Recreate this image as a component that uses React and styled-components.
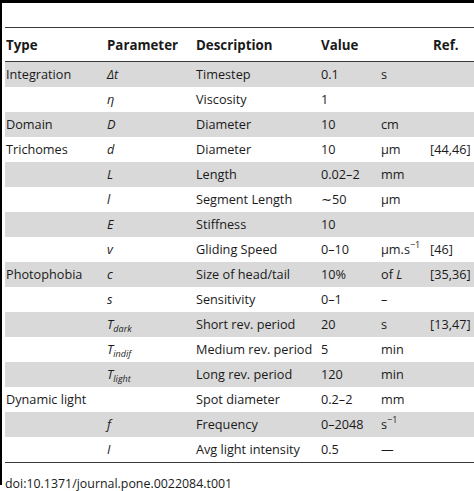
import React from "react";
import styled, { createGlobalStyle } from "styled-components";

const Global = createGlobalStyle`
  html, body {
    margin: 0;
    padding: 0;
    background: #ffffff;
  }
  body {
    font-family: "Open Sans", "Liberation Sans", sans-serif;
    color: #1a1a1a;
  }
`;

const Frame = styled.div`
  width: 474px;
  border-top: 3px solid #000;
  box-sizing: border-box;
`;

const Body = styled.div`
  border-left: 2px solid #000;
  padding-left: 3px;
  padding-top: 24px;
`;

const Table = styled.table`
  width: 469px;
  border-collapse: collapse;
  table-layout: fixed;
  font-size: 12.7px;
  border-top: 1px solid #3a3a3a;
  border-bottom: 1px solid #3a3a3a;
`;

const Head = styled.th`
  height: 33px;
  padding: 0 0 0 ${(p) => p.$pad || 1}px;
  text-align: left;
  font-weight: 700;
  font-size: 13.3px;
  border-bottom: 1px solid #3a3a3a;
  white-space: nowrap;
`;

const Row = styled.tr`
  background: ${(p) => (p.$shade ? "#d9d9d9" : "#ffffff")};
`;

const Cell = styled.td`
  height: 25px;
  padding: 0 0 0 1px;
  white-space: nowrap;
  line-height: 25px;
`;

const Sym = styled.i`
  font-style: italic;
`;

const Sub = styled.sub`
  font-size: 9px;
  font-style: italic;
  vertical-align: -3px;
  line-height: 0;
`;

const Sup = styled.sup`
  font-size: 9px;
  vertical-align: 6px;
  line-height: 0;
`;

const Spacer = styled.div`
  height: 22px;
`;

const Caption = styled.div`
  padding: 0 0 0 5px;
  margin-top: -10px;
  font-size: 12.4px;
  line-height: 18px;
  white-space: nowrap;
`;

const rows = [
  ["Integration", <Sym>Δt</Sym>, "Timestep", "0.1", "s", ""],
  ["", <Sym>η</Sym>, "Viscosity", "1", "", ""],
  ["Domain", <Sym>D</Sym>, "Diameter", "10", "cm", ""],
  ["Trichomes", <Sym>d</Sym>, "Diameter", "10", "μm", "[44,46]"],
  ["", <Sym>L</Sym>, "Length", "0.02–2", "mm", ""],
  ["", <Sym>l</Sym>, "Segment Length", "∼50", "μm", ""],
  ["", <Sym>E</Sym>, "Stiffness", "10", "", ""],
  ["", <Sym>v</Sym>, "Gliding Speed", "0–10", <>μm.s<Sup>−1</Sup></>, "[46]"],
  ["Photophobia", <Sym>c</Sym>, "Size of head/tail", "10%", <>of <Sym>L</Sym></>, "[35,36]"],
  ["", <Sym>s</Sym>, "Sensitivity", "0–1", "–", ""],
  ["", <><Sym>T</Sym><Sub>dark</Sub></>, "Short rev. period", "20", "s", "[13,47]"],
  ["", <><Sym>T</Sym><Sub>indif</Sub></>, "Medium rev. period", "5", "min", ""],
  ["", <><Sym>T</Sym><Sub>light</Sub></>, "Long rev. period", "120", "min", ""],
  ["Dynamic light", "", "Spot diameter", "0.2–2", "mm", ""],
  ["", <Sym>f</Sym>, "Frequency", "0–2048", <>s<Sup>−1</Sup></>, ""],
  ["", <Sym>I</Sym>, "Avg light intensity", "0.5", "—", ""],
];

export default function App() {
  return (
    <>
      <Global />
      <Frame>
        <Body>
          <Table>
            <colgroup>
              <col style={{ width: 101 }} />
              <col style={{ width: 89 }} />
              <col style={{ width: 125 }} />
              <col style={{ width: 60 }} />
              <col style={{ width: 49 }} />
              <col style={{ width: 45 }} />
            </colgroup>
            <thead>
              <tr>
                <Head>Type</Head>
                <Head>Parameter</Head>
                <Head>Description</Head>
                <Head>Value</Head>
                <Head />
                <Head $pad={4}>Ref.</Head>
              </tr>
            </thead>
            <tbody>
              {rows.map((r, i) => (
                <Row key={i} $shade={i % 2 === 0}>
                  {r.map((c, j) => (
                    <Cell key={j}>{c}</Cell>
                  ))}
                </Row>
              ))}
            </tbody>
          </Table>
          <Spacer />
        </Body>
        <Caption>doi:10.1371/journal.pone.0022084.t001</Caption>
      </Frame>
    </>
  );
}
